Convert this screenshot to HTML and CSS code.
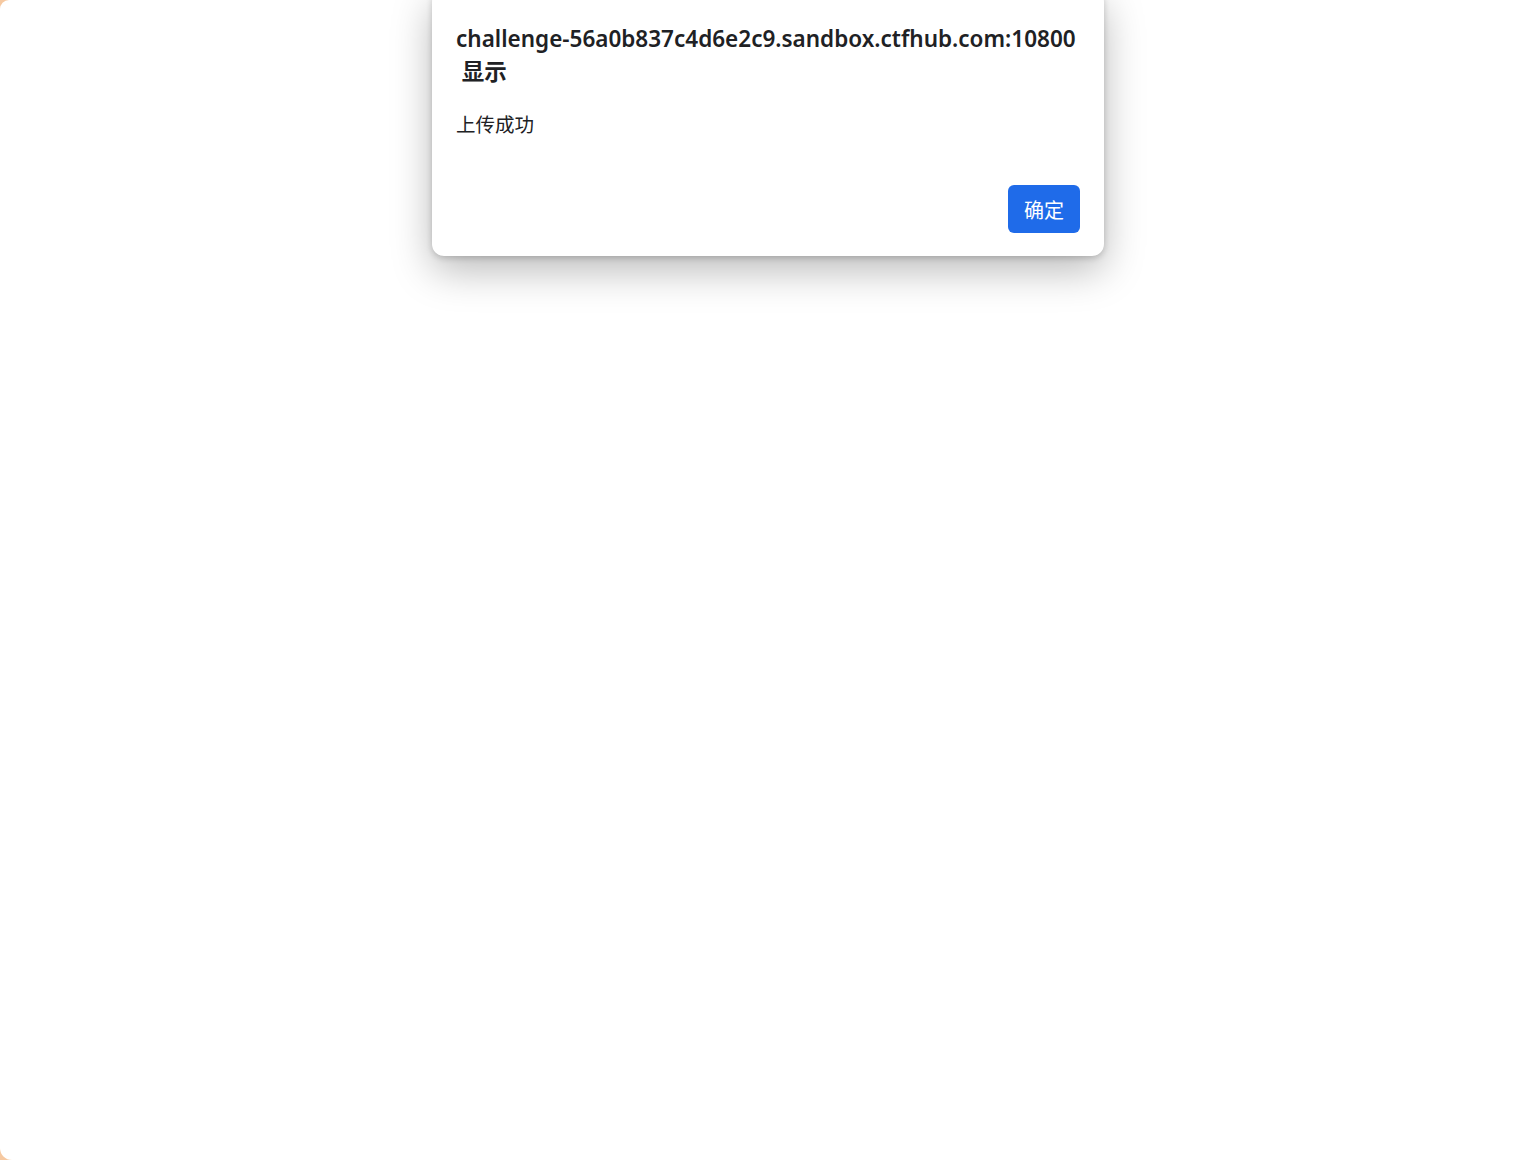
FILE: index.html
```html
<!DOCTYPE html>
<html lang="zh-CN">
<head>
<meta charset="utf-8">
<title>上传成功</title>
<link rel="stylesheet" href="styles.css">
</head>
<body>
<div class="page">
  <div class="dialog" role="alertdialog">
    <div class="dialog-title">challenge-56a0b837c4d6e2c9.sandbox.ctfhub.com:10800
 显示</div>
    <div class="dialog-message">上传成功</div>
    <div class="dialog-actions">
      <button class="btn-ok">确定</button>
    </div>
  </div>
</div>
</body>
</html>
```
FILE: styles.css
```css
html, body {
  margin: 0;
  padding: 0;
  height: 100%;
}
body {
  background: #f6c9a1;
  font-family: "Noto Sans", "Noto Sans CJK SC", sans-serif;
  color: #202124;
}
.page {
  height: 100%;
  background: #ffffff;
  border-top-left-radius: 9px;
  border-bottom-left-radius: 12px;
  display: flex;
  justify-content: center;
  align-items: flex-start;
  overflow: hidden;
}
.dialog {
  width: 672px;
  box-sizing: border-box;
  margin-top: -10px;
  padding: 32px 24px 23px;
  background: #ffffff;
  border-radius: 12px;
  box-shadow: 0 14px 40px rgba(0, 0, 0, 0.28), 0 2px 6px rgba(0, 0, 0, 0.18);
}
.dialog-title {
  font-size: 22.5px;
  font-weight: 600;
  line-height: 33px;
  white-space: pre-wrap;
  color: #202124;
}
.dialog-message {
  margin-top: 22px;
  font-family: "Noto Sans CJK SC", sans-serif;
  font-size: 19.5px;
  line-height: 28px;
  color: #202124;
}
.dialog-actions {
  display: flex;
  justify-content: flex-end;
  margin-top: 47px;
}
.btn-ok {
  width: 72px;
  height: 48px;
  border: none;
  border-radius: 6px;
  background: #1f6be9;
  color: #ffffff;
  font-family: "Noto Sans CJK SC", sans-serif;
  font-size: 20px;
  padding: 0;
}
```
